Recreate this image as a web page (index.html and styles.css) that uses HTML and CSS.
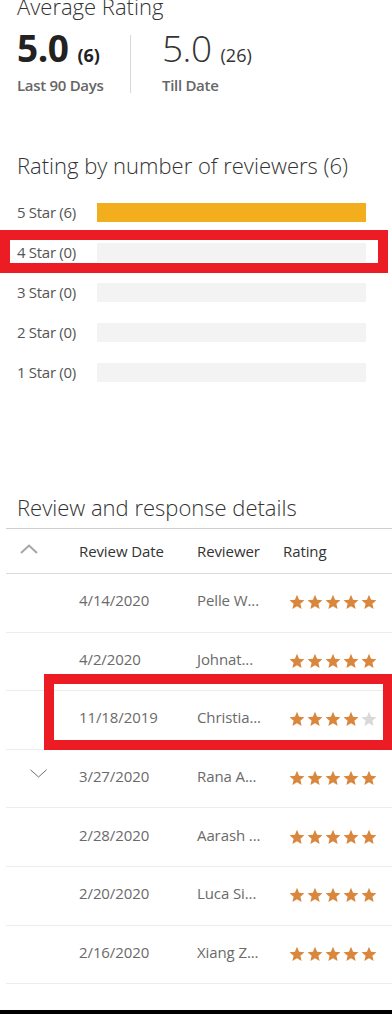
FILE: index.html
```html
<!DOCTYPE html>
<html lang="en">
<head>
<meta charset="utf-8">
<title>Ratings</title>
<link rel="stylesheet" href="styles.css">
</head>
<body>
<div class="page">
  <section class="avg">
    <h2 class="title title-top">Average Rating</h2>
    <div class="avg-row">
      <div class="avg-block avg-first">
        <div class="avg-value"><span class="big big-bold">5.0</span><span class="count count-bold">(6)</span></div>
        <div class="avg-label">Last 90 Days</div>
      </div>
      <div class="avg-divider"></div>
      <div class="avg-block avg-second">
        <div class="avg-value"><span class="big big-light">5.0</span><span class="count">(26)</span></div>
        <div class="avg-label">Till Date</div>
      </div>
    </div>
  </section>

  <section class="dist">
    <h2 class="title title-dist">Rating by number of reviewers (6)</h2>
    <ul class="bars">
      <li class="bar-row"><span class="bar-label">5 Star (6)</span><div class="bar-track"><div class="bar-fill" style="width:100%"></div></div></li>
      <li class="bar-row"><span class="bar-label">4 Star (0)</span><div class="bar-track"><div class="bar-fill" style="width:0%"></div></div></li>
      <li class="bar-row"><span class="bar-label">3 Star (0)</span><div class="bar-track"><div class="bar-fill" style="width:0%"></div></div></li>
      <li class="bar-row"><span class="bar-label">2 Star (0)</span><div class="bar-track"><div class="bar-fill" style="width:0%"></div></div></li>
      <li class="bar-row"><span class="bar-label">1 Star (0)</span><div class="bar-track"><div class="bar-fill" style="width:0%"></div></div></li>
    </ul>
  </section>

  <section class="details">
    <h2 class="title title-details">Review and response details</h2>
    <div class="table">
      <div class="trow thead">
        <div class="cell cell-icon"><svg class="chev-up" width="18" height="10" viewBox="0 0 18 10"><path d="M1 9 L9 1.5 L17 9" fill="none" stroke="#a6a6a6" stroke-width="2"/></svg></div>
        <div class="cell cell-date">Review Date</div>
        <div class="cell cell-name">Reviewer</div>
        <div class="cell cell-rating">Rating</div>
      </div>

      <div class="trow">
        <div class="cell cell-icon"></div>
        <div class="cell cell-date">4/14/2020</div>
        <div class="cell cell-name">Pelle W...</div>
        <div class="cell cell-rating"><span class="stars s5"></span></div>
      </div>
      <div class="trow">
        <div class="cell cell-icon"></div>
        <div class="cell cell-date">4/2/2020</div>
        <div class="cell cell-name">Johnat...</div>
        <div class="cell cell-rating"><span class="stars s5"></span></div>
      </div>
      <div class="trow">
        <div class="cell cell-icon"></div>
        <div class="cell cell-date">11/18/2019</div>
        <div class="cell cell-name">Christia...</div>
        <div class="cell cell-rating"><span class="stars s4"></span></div>
      </div>
      <div class="trow">
        <div class="cell cell-icon"><svg class="chev-down" width="17" height="9" viewBox="0 0 17 9"><path d="M0.5 0.8 L8.5 8 L16.5 0.8" fill="none" stroke="#6e6e6e" stroke-width="1"/></svg></div>
        <div class="cell cell-date">3/27/2020</div>
        <div class="cell cell-name">Rana A...</div>
        <div class="cell cell-rating"><span class="stars s5"></span></div>
      </div>
      <div class="trow">
        <div class="cell cell-icon"></div>
        <div class="cell cell-date">2/28/2020</div>
        <div class="cell cell-name">Aarash ...</div>
        <div class="cell cell-rating"><span class="stars s5"></span></div>
      </div>
      <div class="trow">
        <div class="cell cell-icon"></div>
        <div class="cell cell-date">2/20/2020</div>
        <div class="cell cell-name">Luca Si...</div>
        <div class="cell cell-rating"><span class="stars s5"></span></div>
      </div>
      <div class="trow">
        <div class="cell cell-icon"></div>
        <div class="cell cell-date">2/16/2020</div>
        <div class="cell cell-name">Xiang Z...</div>
        <div class="cell cell-rating"><span class="stars s5"></span></div>
      </div>
    </div>
  </section>

  <div class="bottom-bar"></div>

  <div class="highlight highlight-bar"></div>
  <div class="highlight highlight-row"></div>
</div>

<svg width="0" height="0" class="defs">
  <defs>
    <symbol id="star" viewBox="0 0 24 24">
      <path d="M12 1.2 L15.1 8.6 L23.2 9.3 L17.1 14.6 L18.9 22.6 L12 18.4 L5.1 22.6 L6.9 14.6 L0.8 9.3 L8.9 8.6 Z"/>
    </symbol>
  </defs>
</svg>
<script>
document.querySelectorAll('.stars').forEach(function (el) {
  var n = el.classList.contains('s4') ? 4 : 5;
  var html = '';
  for (var i = 0; i < 5; i++) {
    html += '<svg class="star ' + (i < n ? 'on' : 'off') + '" width="16" height="16"><use href="#star"/></svg>';
  }
  el.innerHTML = html;
});
</script>
</body>
</html>
```

FILE: styles.css
```css
* { box-sizing: border-box; }
html, body { margin: 0; padding: 0; background: #fff; }
body {
  font-family: "Open Sans", "Noto Sans", "DejaVu Sans", sans-serif;
  color: #333;
  overflow: hidden;
}
.page {
  position: relative;
  width: 392px;
  height: 1014px;
  display: flex;
  flex-direction: column;
  overflow: hidden;
}
.defs { position: absolute; }

.title {
  margin: 0;
  font-weight: 300;
  font-size: 22px;
  line-height: 28px;
  color: #333;
  padding-left: 17px;
  letter-spacing: 0;
}
.title-top { margin-top: -8px; font-size: 22px; }

.avg-row {
  display: flex;
  margin-top: 9px;
}
.avg-block { display: flex; flex-direction: column; }
.avg-first { width: 130px; padding-left: 17px; }
.avg-second { padding-left: 31px; }
.avg-divider {
  width: 1px;
  height: 58px;
  margin-top: 6px;
  background: #d6d6d6;
}
.avg-value {
  display: flex;
  align-items: baseline;
  height: 38px;
  line-height: 38px;
}
.big { font-size: 37px; letter-spacing: -0.5px; color: #222; }
.big-bold { font-weight: 700; }
.big-light { font-weight: 300; color: #333; }
.count { font-size: 18px; margin-left: 9px; color: #333; }
.count-bold { font-weight: 700; color: #222; }
.avg-label {
  margin-top: 8px;
  font-size: 15px;
  line-height: 20px;
  color: #666;
  font-weight: 600;
  letter-spacing: -0.3px;
}

.dist { margin-top: 56px; }
.bars {
  list-style: none;
  margin: 13px 0 0;
  padding: 0;
}
.bar-row {
  display: flex;
  align-items: center;
  height: 40px;
  padding-left: 17px;
}
.bar-label {
  width: 80px;
  font-size: 15px;
  color: #555;
  letter-spacing: -0.3px;
}
.bar-track {
  width: 269px;
  height: 19px;
  background: #f3f3f3;
}
.bar-fill {
  height: 100%;
  background: #f2ae1c;
}

.details { margin-top: 101px; }
.table {
  margin-top: 7px;
  margin-left: 6px;
  border-top: 1px solid #cfcfcf;
}
.trow {
  display: flex;
  align-items: center;
  height: 58.6px;
  padding-bottom: 5px;
  border-bottom: 1px solid #ececec;
  font-size: 15px;
  color: #6a6a6a;
  letter-spacing: -0.1px;
}
.thead {
  height: 45px;
  padding-bottom: 1px;
  border-bottom: 1px solid #dcdcdc;
  color: #333;
}
.cell { white-space: nowrap; }
.cell-icon { width: 73px; position: relative; height: 100%; display: flex; align-items: center; }
.cell-date { width: 118px; }
.cell-name { width: 86px; }
.cell-rating { flex: 1; }
.chev-up { margin-left: 14px; margin-top: -4px; }
.chev-down { margin-left: 24px; margin-top: -6px; }

.stars {
  display: flex;
  gap: 2px;
  margin-left: 6px;
  margin-top: 4px;
}
.star { display: block; }
.star.on { fill: #d8873c; }
.star.off { fill: #d9d9d9; }

.bottom-bar {
  margin-top: auto;
  height: 4px;
  background: #000;
}

.highlight {
  position: absolute;
  border: 10px solid #ec1c24;
  pointer-events: none;
}
.highlight-bar { left: 0; top: 230px; width: 388px; height: 43px; }
.highlight-row { left: 44px; top: 674px; width: 349px; height: 76px; }
```
